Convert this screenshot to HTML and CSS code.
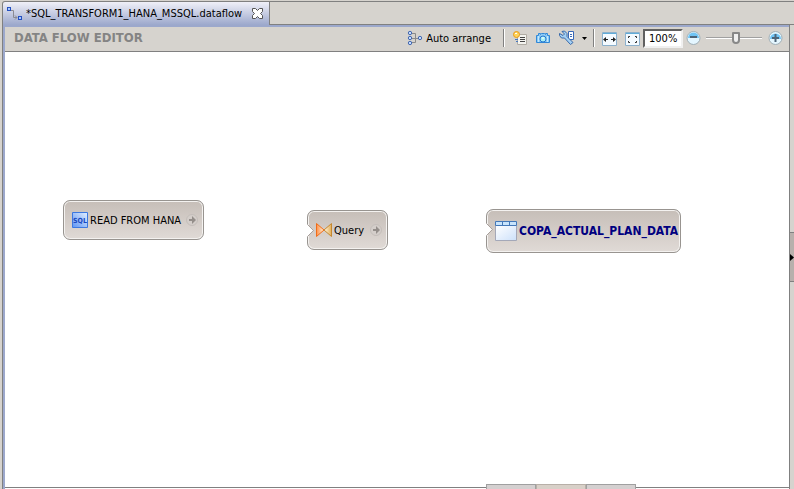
FILE: index.html
```html
<!DOCTYPE html>
<html lang="en">
<head>
    <meta charset="UTF-8">
    <meta name="viewport" content="width=device-width, initial-scale=1.0">
    <title>SQL_TRANSFORM1_HANA_MSSQL.dataflow</title>
    <link rel="stylesheet" href="styles.css">
</head>
<body>
    <div class="tab-bar">
        <div class="tab">
            <svg class="tab-icon" width="17" height="16" viewBox="0 0 17 16">
                <path d="M5 4.500h2.500v7H11" fill="none" stroke="#8a8a92"/>
                <path d="M9 9.500l2 2-2 2" fill="none" stroke="#8a8a92"/>
                <rect x="1.500" y="1.500" width="3" height="3" fill="#a8c8ff" stroke="#2450c0"/>
                <rect x="12.500" y="10.500" width="3" height="3" fill="#a8c8ff" stroke="#2450c0"/>
            </svg>
            <span class="tab-title">*SQL_TRANSFORM1_HANA_MSSQL.dataflow</span>
            <button type="button" class="close" aria-label="Close">
                <svg width="11" height="11" viewBox="0 0 11 11">
                    <path d="M.5.5h3l2 2 2-2h3v3l-2 2 2 2v3h-3l-2-2-2 2h-3v-3l2-2-2-2z" fill="#fff" stroke="#555"/>
                </svg>
            </button>
        </div>
        <div class="tab-rest"></div>
    </div>
    <div class="workspace">
        <main class="editor">
            <header class="toolbar">
                <h1>DATA FLOW EDITOR</h1>
                <button type="button" class="arrange">
                    <svg width="16" height="16" viewBox="0 0 16 16">
                        <path d="M4 3.500h4.500v9H4M4 8.500h8" fill="none" stroke="#8a8a8a"/>
                        <g fill="#c4dcff" stroke="#4468b0">
                            <circle cx="3" cy="3" r="1.700"/>
                            <circle cx="3" cy="8" r="1.700"/>
                            <circle cx="3" cy="13" r="1.700"/>
                            <circle cx="13" cy="8" r="1.700"/>
                        </g>
                    </svg>
                    Auto arrange
                </button>
                <span class="separator"></span>
                <div class="tools">
                    <button type="button" aria-label="Show details">
                        <svg width="16" height="16" viewBox="0 0 16 16">
                            <path d="M5.500 4.500h9v10h-9z" fill="#f4f4f0" stroke="#b0aca4"/>
                            <path d="M8 7.500h5M8 9.500h5M8 11.500h5" stroke="#444"/>
                            <circle cx="4.500" cy="4.500" r="3" fill="#ffd45c" stroke="#e89a18"/>
                            <path d="M3 3.500h2" stroke="#fff"/>
                            <path d="M3 9.500h3M4 11.500h2" stroke="#4878c0"/>
                        </svg>
                    </button>
                    <button type="button" aria-label="Take snapshot">
                        <svg width="16" height="16" viewBox="0 0 16 16">
                            <path d="M1.500 5.500h2v-2h2v1l1-1h3l1 1v-1h2v2h2v7h-13z" fill="#8ccaf4" stroke="#3088d8"/>
                            <path d="M3.500 6v6M12.500 6v6" stroke="#c4e8fc"/>
                            <circle cx="8" cy="9" r="3" fill="#a8f0f4" stroke="#2878d0"/>
                            <path d="M7 8h2" stroke="#fff"/>
                        </svg>
                    </button>
                    <button type="button" class="with-arrow" aria-label="Settings">
                        <svg width="17" height="16" viewBox="0 0 17 16">
                            <path d="M10.500 1.500h5v8h-5z" fill="#fff" stroke="#3868b8"/>
                            <path d="M12 4.500h2M12 6.500h2" stroke="#3868b8"/>
                            <path d="M4 1.500L6.500 4 5 5.500 1.500 3.500v2l2 2.500h3l6 6.500 2.500-2-6-6V3.500L6.500 1z" fill="#a4d0f4" stroke="#3868a8"/>
                        </svg>
                        <svg width="5" height="3" viewBox="0 0 5 3"><path d="M0 0h5L2.500 3z"/></svg>
                    </button>
                </div>
                <span class="separator"></span>
                <div class="zoom">
                    <button type="button" class="fit" aria-label="Fit to width">
                        <svg width="15" height="14" viewBox="0 0 15 14">
                            <path d="M.5.5h14v13H.5z" fill="#f4faff" stroke="#8cb0cc"/>
                            <path d="M1 1.500h13" stroke="#60acd8"/>
                            <path d="M2 7.500h4M9 7.500h4" stroke="#222"/>
                            <path d="M4 5v5L1 7.500zM11 5v5l3-2.500z" fill="#222"/>
                        </svg>
                    </button>
                    <button type="button" class="fit" aria-label="Fit to page">
                        <svg width="15" height="14" viewBox="0 0 15 14">
                            <path d="M.5.5h14v13H.5z" fill="#f4faff" stroke="#8cb0cc"/>
                            <path d="M1 1.500h13" stroke="#60acd8"/>
                            <path d="M3.500 6V4.500H5M10 4.500h1.500V6M3.500 9v1.500H5M10 10.500h1.500V9" fill="none" stroke="#333"/>
                        </svg>
                    </button>
                    <input type="text" class="zoom-value" value="100%" aria-label="Zoom level">
                    <button type="button" aria-label="Zoom out">
                        <svg width="15" height="16" viewBox="0 0 15 16">
                            <circle cx="7.500" cy="8" r="6.500" fill="#e4f6ff" stroke="#a0b0b8"/>
                            <path d="M2 8a5.500 5.500 0 0 1 11 0z" fill="#70c4f4"/>
                            <path d="M4 6h7v2H4z" fill="#4c6478"/>
                        </svg>
                    </button>
                    <input type="range" class="zoom-slider" min="0" max="100" value="55" aria-label="Zoom">
                    <button type="button" aria-label="Zoom in">
                        <svg width="15" height="16" viewBox="0 0 15 16">
                            <circle cx="7.500" cy="8" r="6.500" fill="#e4f6ff" stroke="#a0b0b8"/>
                            <path d="M2 9a5.500 5.500 0 0 1 11 0z" fill="#70c4f4"/>
                            <path d="M4 7h2.500V4h2v3H11v2H8.500v3h-2V9H4z" fill="#4c6478"/>
                        </svg>
                    </button>
                </div>
            </header>
            <section class="canvas">
                <div class="node node-read">
                    <svg width="16" height="16" viewBox="0 0 16 16">
                        <defs>
                            <linearGradient id="sql" x1="1" y1="0" x2="0" y2="1">
                                <stop offset="0" stop-color="#e4f0ff"/>
                                <stop offset="1" stop-color="#5c94f4"/>
                            </linearGradient>
                        </defs>
                        <path d="M.5.5h15v15H.5z" fill="url(#sql)" stroke="#3c78e0"/>
                        <text x="1" y="11" class="sql-text" fill="#1848c0">SQL</text>
                    </svg>
                    <span>READ FROM HANA</span>
                    <svg class="port" width="12" height="12" viewBox="0 0 12 12">
                        <circle cx="6" cy="6" r="5.500" fill="#d4ceca" stroke="#c4beba"/>
                        <path d="M3 5h3V2l4 4-4 4V7H3z" fill="#948e8a"/>
                    </svg>
                </div>
                <div class="node node-query">
                    <svg class="notch" width="7" height="13" viewBox="0 0 7 13">
                        <path d="M0 0v13l6-6.500z" fill="#fff"/>
                        <path d="M.5.5l6 6-6 6" fill="none" stroke="#a8a09c"/>
                    </svg>
                    <svg width="16" height="14" viewBox="0 0 16 14">
                        <defs>
                            <linearGradient id="joinLeft">
                                <stop offset="0" stop-color="#ff9048"/>
                                <stop offset="1" stop-color="#fff4dc"/>
                            </linearGradient>
                            <linearGradient id="joinRight">
                                <stop offset="0" stop-color="#fffcf0"/>
                                <stop offset="1" stop-color="#e4ac50"/>
                            </linearGradient>
                        </defs>
                        <path d="M.5.5v13L8 7z" fill="url(#joinLeft)" stroke="#f06c18"/>
                        <path d="M15.500.5v13L8 7z" fill="url(#joinRight)" stroke="#c48830"/>
                    </svg>
                    <span>Query</span>
                    <svg class="port" width="12" height="12" viewBox="0 0 12 12">
                        <circle cx="6" cy="6" r="5.500" fill="#d4ceca" stroke="#c4beba"/>
                        <path d="M3 5h3V2l4 4-4 4V7H3z" fill="#948e8a"/>
                    </svg>
                </div>
                <div class="node node-target">
                    <svg class="notch" width="7" height="13" viewBox="0 0 7 13">
                        <path d="M0 0v13l6-6.500z" fill="#fff"/>
                        <path d="M.5.5l6 6-6 6" fill="none" stroke="#a8a09c"/>
                    </svg>
                    <svg width="22" height="20" viewBox="0 0 22 20">
                        <defs>
                            <linearGradient id="table" x1="0" y1="0" x2="1" y2="1">
                                <stop offset="0" stop-color="#fff"/>
                                <stop offset="1" stop-color="#cce0fa"/>
                            </linearGradient>
                        </defs>
                        <path d="M.5 4.500h21v15H.5z" fill="url(#table)" stroke="#a4a8b8"/>
                        <path d="M.5.5h21v4H.5z" fill="#c8e4fc" stroke="#4478b8"/>
                        <path d="M7.500 1v3M14.500 1v3" stroke="#4478b8"/>
                    </svg>
                    <span>COPA_ACTUAL_PLAN_DATA</span>
                </div>
            </section>
            <footer class="bottom">
                <span></span>
                <span class="sash-middle"></span>
                <span></span>
            </footer>
        </main>
        <aside class="palette">
            <button type="button" class="palette-handle" aria-label="Show palette">
                <svg width="4" height="7" viewBox="0 0 4 7"><path d="M0 0v7l4-3.500z"/></svg>
            </button>
        </aside>
    </div>
</body>
</html>
```

FILE: styles.css
```css
* {
    box-sizing: border-box;
}
body {
    margin: 0;
    height: 100vh;
    display: flex;
    flex-direction: column;
    overflow: hidden;
    background: #d6d3ce;
    font-family: Tahoma, "DejaVu Sans Condensed", "DejaVu Sans", sans-serif;
    font-size: 11px;
    color: #000;
}
button {
    display: flex;
    align-items: center;
    padding: 0;
    border: none;
    background: none;
    font: inherit;
    cursor: pointer;
}
svg {
    display: block;
    flex: none;
}
.tab-bar {
    display: flex;
    height: 25px;
    padding-top: 1px;
    padding-left: 2px;
}
.tab {
    display: flex;
    align-items: center;
    width: 268px;
    padding: 0 6px 0 3px;
    border: 1px solid #808080;
    border-bottom: none;
    border-radius: 3px 0 0 0;
    background: linear-gradient(#f0f0f8, #9ca8cc);
}
.tab-title {
    margin-left: 3px;
    flex: 1;
    white-space: nowrap;
}
.tab-rest {
    flex: 1;
    border-top: 1px solid #808080;
    border-bottom: 1px solid #808080;
}
.workspace {
    flex: 1;
    display: flex;
    margin-left: 2px;
    border-left: 1px solid #808080;
}
.editor {
    flex: 1;
    display: flex;
    flex-direction: column;
    border-top: 2px solid #9ca8cc;
    border-left: 2px solid #9ca8cc;
}
.toolbar {
    display: flex;
    align-items: center;
    height: 25px;
    padding: 0 6px 2px 0;
    border-bottom: 1px solid #808080;
}
.toolbar h1 {
    margin: 0 auto 0 9px;
    font-size: 13px;
    line-height: 16px;
    color: #848484;
}
.arrange {
    gap: 3px;
}
.separator {
    width: 2px;
    height: 18px;
    border-left: 1px solid #808080;
    border-right: 1px solid #fff;
}
.arrange + .separator {
    margin-left: 12px;
}
.tools {
    display: flex;
    gap: 7px;
    margin: 0 6px 0 7px;
}
.with-arrow {
    gap: 7px;
}
.zoom {
    display: flex;
    align-items: center;
    margin-left: 7px;
    gap: 3px;
}
.fit {
    padding-top: 2px;
}
.fit:first-child {
    margin-right: 5px;
}
.zoom-value {
    width: 40px;
    height: 19px;
    padding: 0 2px 0 4px;
    border: 2px solid;
    border-color: #606060 #f0f0f0 #f0f0f0 #606060;
    background: #fff;
    font: inherit;
}
.zoom-slider {
    width: 56px;
    height: 16px;
    margin: 0 3px 0 2px;
    appearance: none;
    background: none;
}
.zoom-slider::-webkit-slider-runnable-track {
    height: 2px;
    border-top: 1px solid #a0a0a0;
    border-bottom: 1px solid #fff;
}
.zoom-slider::-webkit-slider-thumb {
    appearance: none;
    width: 8px;
    height: 12px;
    margin-top: -6px;
    border: 2px solid #888;
    border-radius: 1px 1px 4px 4px;
    background: #f0f0f0;
}
.canvas {
    flex: 1;
    position: relative;
    background: #fff;
}
.node {
    position: absolute;
    display: flex;
    align-items: center;
    height: 40px;
    padding: 0 5px 0 8px;
    gap: 2px;
    border: 1px solid #989490;
    border-radius: 7px;
    background: linear-gradient(#c6beb8, #e0dad6);
    box-shadow: inset 0 0 0 1px #f4f2f0;
    white-space: nowrap;
}
.node .port {
    margin-left: auto;
}
.node .notch {
    position: absolute;
    left: -1px;
    top: 13px;
}
.node-read {
    left: 58px;
    top: 148px;
    width: 141px;
}
.node-query {
    left: 302px;
    top: 158px;
    width: 81px;
}
.node-target {
    left: 481px;
    top: 157px;
    width: 195px;
    height: 44px;
    color: #000080;
    font-size: 12px;
    font-weight: bold;
}
.sql-text {
    font-size: 7px;
    font-weight: bold;
}
.palette {
    display: flex;
    align-items: center;
    width: 5px;
    border-left: 1px solid #808080;
}
.palette-handle {
    width: 4px;
    height: 50px;
    border-top: 1px solid #808080;
    border-bottom: 1px solid #808080;
    background: #b8b0ac;
}
.bottom {
    display: flex;
    justify-content: center;
    height: 5px;
    padding-left: 328px;
    padding-right: 0;
    background: linear-gradient(#fff 3px, #808080 3px, #808080 4px, #fff 4px);
}
.bottom span {
    width: 50px;
    border: 1px solid #a0a0a0;
    border-bottom: none;
    background: #d4d0d0;
}
.bottom .sash-middle {
    border-color: #b8b0a8;
    background: #d8d0c8;
}
```
